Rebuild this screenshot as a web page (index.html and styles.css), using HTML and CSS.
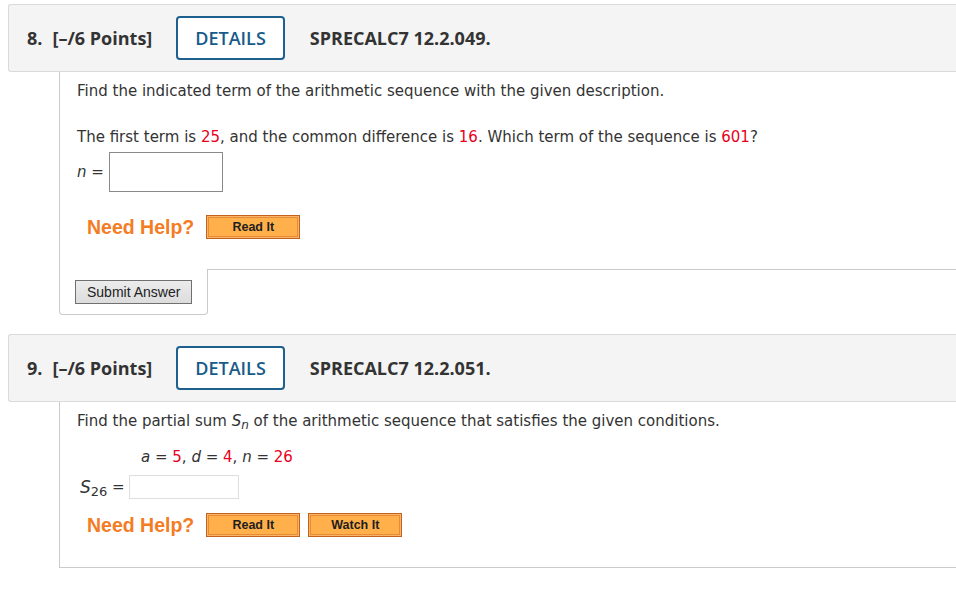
FILE: index.html
```html
<!DOCTYPE html>
<html lang="en">
<head>
    <meta charset="UTF-8">
    <meta name="viewport" content="width=device-width, initial-scale=1.0">
    <title>Assignment</title>
    <link rel="stylesheet" href="styles.css">
</head>
<body>
    <div class="question">
        <div class="q-head">
            <span class="q-num">8.</span>
            <span class="q-points">[&ndash;/6 Points]</span>
            <button class="details">DETAILS</button>
            <span class="q-code">SPRECALC7 12.2.049.</span>
        </div>
        <div class="q-body">
            <div class="q-content">
                <p class="line">Find the indicated term of the arithmetic sequence with the given description.</p>
                <p class="line gap-lg">The first term is <span class="val">25</span>, and the common difference is <span class="val">16</span>. Which term of the sequence is <span class="val">601</span>?</p>
                <div class="answer-row">
                    <span class="var">n</span>&nbsp;=&nbsp;
                    <input type="text" class="answer-box tall">
                </div>
                <div class="help">
                    <span class="need-help">Need Help?</span>
                    <button class="help-btn">Read It</button>
                </div>
            </div>
            <div class="submit-tab">
                <button class="submit">Submit Answer</button>
            </div>
        </div>
    </div>

    <div class="question">
        <div class="q-head">
            <span class="q-num">9.</span>
            <span class="q-points">[&ndash;/6 Points]</span>
            <button class="details">DETAILS</button>
            <span class="q-code">SPRECALC7 12.2.051.</span>
        </div>
        <div class="q-body">
            <div class="q-content">
                <p class="line">Find the partial sum <span class="var">S<sub>n</sub></span> of the arithmetic sequence that satisfies the given conditions.</p>
                <p class="line given"><span class="var">a</span> = <span class="val">5</span>, <span class="var">d</span> = <span class="val">4</span>, <span class="var">n</span> = <span class="val">26</span></p>
                <div class="answer-row sum-row">
                    <span class="var big-s">S<sub>26</sub></span>&nbsp;=&nbsp;
                    <input type="text" class="answer-box flat">
                </div>
                <div class="help help-close">
                    <span class="need-help">Need Help?</span>
                    <button class="help-btn">Read It</button>
                    <button class="help-btn">Watch It</button>
                </div>
            </div>
        </div>
    </div>
</body>
</html>
```

FILE: styles.css
```css
/* Страница с заданиями */
body {
    margin: 0;
    padding: 4px 0 0 8px;
    background: #fff;
    color: #333;
    font-family: "DejaVu Sans", Verdana, sans-serif;
    font-size: 15px;
}
.question {
    margin-bottom: 19px;
}
.q-head {
    display: flex;
    align-items: center;
    height: 66px;
    padding-left: 18px;
    background: #f4f4f4;
    border: 1px solid #dadada;
    border-right: none;
    border-radius: 3px 0 0 3px;
    font-family: "Open Sans", sans-serif;
    font-weight: 700;
    font-size: 18px;
    color: #333;
}
.q-num {
    margin-right: 10px;
}
.q-points {
    margin-right: 24px;
}
.details {
    height: 44px;
    padding: 0 17px;
    margin-right: 25px;
    background: #fff;
    border: 2px solid #1d5f8d;
    border-radius: 4px;
    font-family: "Open Sans", sans-serif;
    font-weight: 600;
    font-size: 18px;
    color: #175b8a;
}
.q-body {
    margin-left: 51px;
}
.q-content {
    border-left: 1px solid #cacaca;
    border-bottom: 1px solid #cacaca;
    padding: 9px 0 30px 17px;
}
.line {
    margin: 0;
    line-height: 20px;
}
.gap-lg {
    margin-top: 26px;
}
.val {
    color: #e8001c;
}
.var {
    font-style: italic;
}
.var sub {
    font-size: 12px;
    vertical-align: -3px;
    line-height: 0;
}
.answer-row {
    display: flex;
    align-items: center;
    margin-top: 5px;
}
.answer-box {
    box-sizing: border-box;
    margin: 0;
    padding: 2px 4px;
    background: #fff;
    font-family: inherit;
    font-size: 14px;
}
.tall {
    width: 114px;
    height: 40px;
    border: 1px solid #8a8a8a;
}
.flat {
    width: 110px;
    height: 24px;
    border: 1px solid #dedede;
}
.help {
    display: flex;
    align-items: center;
    gap: 8px;
    margin-top: 23px;
    padding-left: 10px;
}
.need-help {
    margin-right: 4px;
    font-family: "Liberation Sans", Arial, sans-serif;
    font-weight: 700;
    font-size: 19.5px;
    color: #f47c22;
}
.help-btn {
    width: 94px;
    height: 24px;
    padding: 0;
    background: #ffb04a;
    border: 1px solid #c2621c;
    box-shadow: inset 0 0 0 1px #f7b56a, inset 0 0 0 2px #e98a35;
    font-family: "Liberation Sans", Arial, sans-serif;
    font-weight: 700;
    font-size: 12.5px;
    color: #1e1e1e;
    cursor: pointer;
}
.submit-tab {
    display: inline-block;
    margin-top: -1px;
    padding: 11px 15px 10px;
    background: #fff;
    border: 1px solid #cacaca;
    border-top: none;
    border-radius: 0 0 4px 4px;
}
.submit {
    height: 24px;
    padding: 0 11px;
    background: linear-gradient(#ececec, #dcdcdc);
    border: 1px solid #707070;
    font-family: "Liberation Sans", Arial, sans-serif;
    font-size: 14px;
    color: #222;
}

/* Задание 9 */
.given {
    margin-top: 16px;
    padding-left: 64px;
}
.sum-row {
    margin-top: 8px;
    padding-left: 3px;
}
.big-s {
    font-size: 17px;
}
.big-s sub {
    font-style: normal;
    font-size: 13px;
}
.help-close {
    margin-top: 14px;
}
```
